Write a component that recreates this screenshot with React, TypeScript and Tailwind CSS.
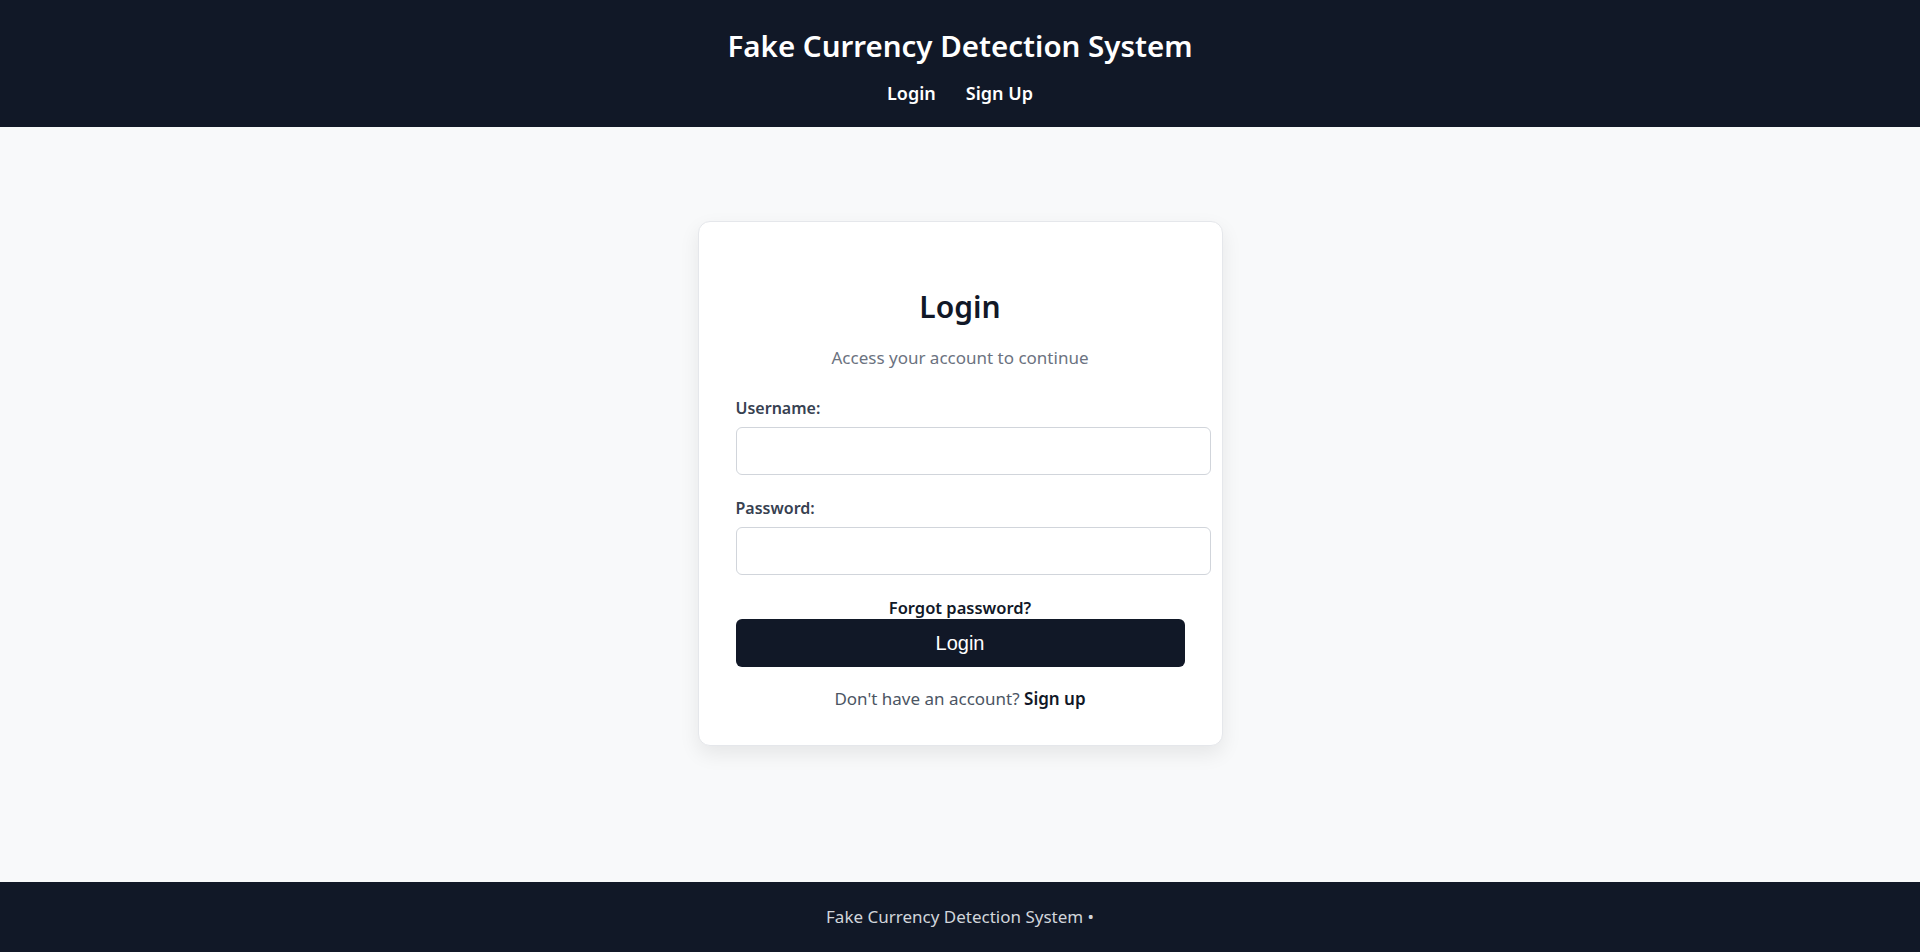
import { useState } from "react";

const font = { fontFamily: "'Noto Sans', 'Open Sans', sans-serif" };

export default function App() {
  const [username, setUsername] = useState("");
  const [password, setPassword] = useState("");

  return (
    <div
      className="min-h-screen flex flex-col bg-[#f8f9fa] font-['Noto_Sans',sans-serif]"
      style={font}
    >
      <header className="h-[127px] bg-[#111827] flex flex-col items-center pt-[26px]">
        <h1 className="text-[29.5px] leading-[40px] font-semibold text-white">
          Fake Currency Detection System
        </h1>
        <nav className="flex flex-row gap-[30px] mt-[14px]">
          <a className="text-[18px] leading-[26px] font-semibold text-white">Login</a>
          <a className="text-[18px] leading-[26px] font-semibold text-white">Sign Up</a>
        </nav>
      </header>

      <main className="flex-1 flex flex-col items-center pt-[94px]">
        <div className="w-[525px] bg-white border border-[#e5e7eb] rounded-[12px] shadow-[0_8px_20px_rgba(0,0,0,0.08)] px-[37px] pt-[65px] pb-[34px]">
          <h2 className="text-center text-[30px] leading-[40px] font-semibold text-[#111827]">
            Login
          </h2>
          <p className="text-center text-[17px] leading-[24px] text-[#6b7280] mt-[19px]">
            Access your account to continue
          </p>

          <form className="mt-[26px]" onSubmit={(e) => e.preventDefault()}>
            <label className="block text-[16px] leading-[24px] font-semibold text-[#374151]">
              Username:
            </label>
            <input
              className="block w-[475px] h-[48px] mt-[7px] px-3 border border-[#d1d5db] rounded-[6px] outline-none bg-white"
              value={username}
              onChange={(e) => setUsername(e.target.value)}
            />
            <label className="block text-[16px] leading-[24px] font-semibold text-[#374151] mt-[21px]">
              Password:
            </label>
            <input
              type="password"
              className="block w-[475px] h-[48px] mt-[7px] px-3 border border-[#d1d5db] rounded-[6px] outline-none bg-white"
              value={password}
              onChange={(e) => setPassword(e.target.value)}
            />
            <div className="text-center mt-[22px] text-[16.5px] leading-[22px] font-semibold text-[#111827]">
              Forgot password?
            </div>
            <button
              type="submit"
              className="block w-[449px] h-[48px] rounded-[6px] bg-[#111827] text-white text-[20px]"
              style={{ fontFamily: "'Liberation Sans', Arial, sans-serif" }}
            >
              Login
            </button>
          </form>

          <p className="text-center mt-[20px] text-[17px] leading-[24px] text-[#4b5563]">
            Don't have an account?{" "}
            <span className="font-semibold text-[#111827]">Sign up</span>
          </p>
        </div>
      </main>

      <footer className="h-[70px] bg-[#111827] flex items-center justify-center">
        <p className="text-[17px] text-[#d1d5db]">Fake Currency Detection System •</p>
      </footer>
    </div>
  );
}
